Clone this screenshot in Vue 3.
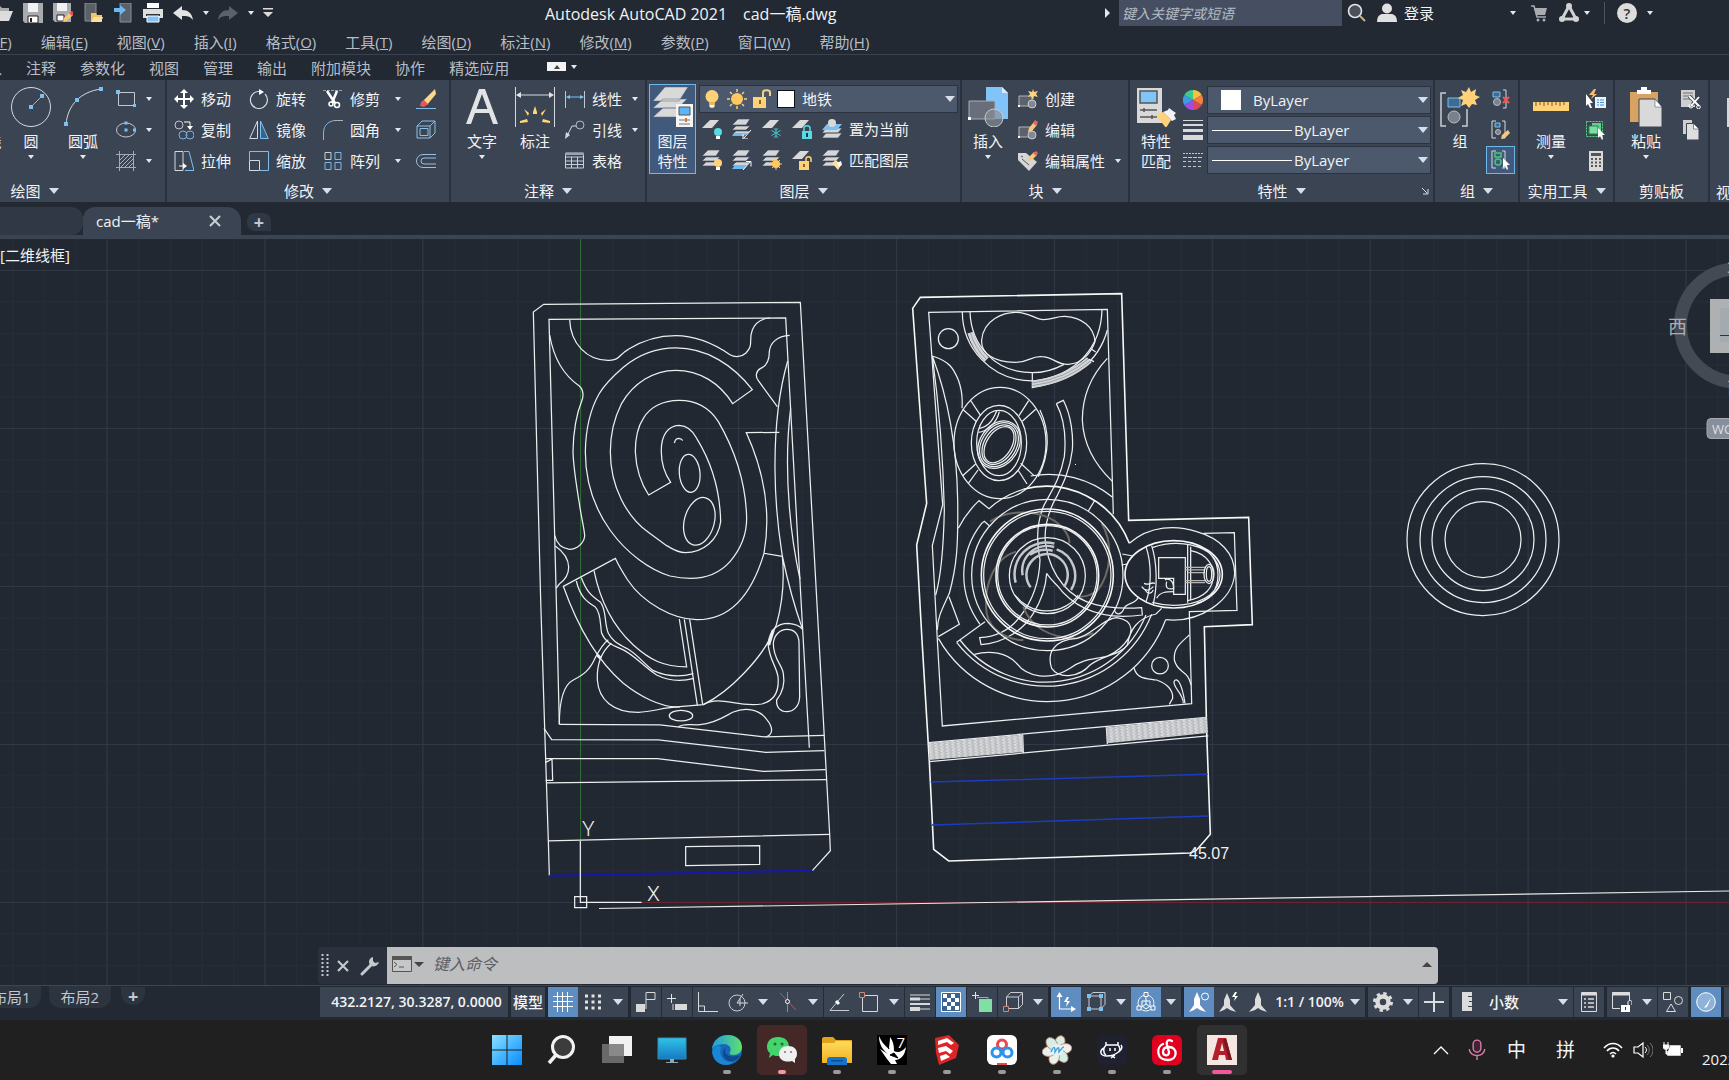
<template>
  <div class="cad">
    <!-- 图标库 -->
    <svg class="sprite" aria-hidden="true">
      <defs>
        <symbol id="open" viewBox="0 0 20 20"><path d="M1 3h6l2 2h7v3H6L2 17H1z" fill="#aaa" /><path d="M5 8h15l-4 10H1z" fill="#dcdcdc" /></symbol>
        <symbol id="save" viewBox="0 0 20 20"><path d="M0 0h20v20H2l-2-2z" fill="#a9abae" /><path d="M5 0h10v9H5z" fill="#f2f2f2" /><path d="M5 13h10v7H5z" fill="#fff" stroke="#222" /><path d="M7 15h2v4H7z" fill="#222" /></symbol>
        <symbol id="saveas" viewBox="0 0 20 20"><path d="M0 0h18v19H2l-2-2z" fill="#a9abae" /><path d="M4 0h10v8H4z" fill="#f2f2f2" /><path d="M4 12h7v6H4z" fill="#fff" stroke="#222" /><path d="M10 19l1-4 6-6 3 3-6 6z" fill="#f3c877" /><path d="M16 10l3-2 2 2-2 3z" fill="#e0565b" /></symbol>
        <symbol id="openweb" viewBox="0 0 20 20"><path d="M2 0h11v18H2z" fill="#5b5f66" stroke="#8b8f95" /><path d="M8 10h5l1 2h5v7H8z" fill="#f1c36b" /><path d="M11 14h9l-2 5H8z" fill="#ffe09a" /></symbol>
        <symbol id="saveweb" viewBox="0 0 20 20"><path d="M7 0h11v19H7z" fill="#5b5f66" stroke="#8b8f95" /><path d="M1 5h6V2l6 5-6 5V9H1z" fill="#6cb9f4" /></symbol>
        <symbol id="print" viewBox="0 0 20 20"><path d="M4 0h12v5H4z" fill="#fff" /><path d="M0 6h20v9H0z" fill="#dedede" /><path d="M3 11h14v2H3z" fill="#333" /><path d="M4 13h12v6H4z" fill="#7fc3f7" stroke="#fff" /></symbol>
        <symbol id="undo" viewBox="0 0 20 20"><path d="M0 10l9-7v4c6 0 10 3 11 10-3-4-6-4-11-4v4z" fill="#e3e3e3" /></symbol>
        <symbol id="redo" viewBox="0 0 20 20"><path d="M20 10l-9-7v4C5 7 1 10 0 17c3-4 6-4 11-4v4z" fill="#5b616b" /></symbol>
        <symbol id="custom" viewBox="0 0 20 20"><path d="M5 5h10v1.500H5zM5 9h10l-5 5z" fill="#dcdcdc" /></symbol>
        <symbol id="find" viewBox="0 0 20 20"><circle cx="8" cy="8" r="6.500" fill="#4b5059" stroke="#e4e4e4" stroke-width="1.600" /><path d="M13 13l5 5" stroke="#d2b27c" stroke-width="2" /></symbol>
        <symbol id="user" viewBox="0 0 20 20"><circle cx="10" cy="5.500" r="5" fill="#e0e0e0" /><path d="M0 19c0-6 3-8 6-8h8c3 0 6 2 6 8z" fill="#e0e0e0" /></symbol>
        <symbol id="cart" viewBox="0 0 20 20"><path d="M2 3h3l3 11h9" fill="none" stroke="#a9acb1" stroke-width="1.500" /><path d="M5 5h13l-2 7H7z" fill="#a9acb1" /><circle cx="9" cy="17" r="1.500" fill="#a9acb1" /><circle cx="15" cy="17" r="1.500" fill="#a9acb1" /></symbol>
        <symbol id="a360" viewBox="0 0 20 20"><path d="M10 3L3 16h14z" fill="none" stroke="#d0d2d4" stroke-width="3" /><circle cx="10" cy="3" r="3" fill="#d0d2d4" /><circle cx="3" cy="16" r="3" fill="#d0d2d4" /><circle cx="17" cy="16" r="3" fill="#d0d2d4" /></symbol>

        <symbol id="pline" viewBox="0 0 40 40"><path d="M2 30h20a10 10 0 0 0 0-20" fill="none" stroke="#d6dae0" /></symbol>
        <symbol id="circle" viewBox="0 0 40 40"><circle cx="20" cy="20" r="19.500" fill="none" stroke="#d6dae0" /><path d="M20 20L31 9" stroke="#7cc0f0" /><path d="M18 18h4v4h-4zM29 7h4v4h-4z" fill="#7cc0f0" /></symbol>
        <symbol id="arc" viewBox="0 0 40 40"><path d="M3 37C5 18 17 5 38 2" fill="none" stroke="#d6dae0" /><path d="M1 35h4v4H1zM12 11h4v4h-4zM36 0h4v4h-4z" fill="#7cc0f0" /></symbol>
        <symbol id="rect" viewBox="0 0 20 20"><path d="M2.500 3.500h16v13h-16z" fill="none" stroke="#c3c8d0" /><path d="M0 1h4v4H0zM17 15h3v3h-3z" fill="#7cc0f0" /></symbol>
        <symbol id="ellipse" viewBox="0 0 20 20"><ellipse cx="10" cy="10" rx="9.500" ry="7" fill="none" stroke="#c3c8d0" /><path d="M8.500 8.500h3v3h-3zM8.500 1.500h3v3h-3zM17 8.500h3v3h-3z" fill="#7cc0f0" /></symbol>
        <symbol id="hatch" viewBox="0 0 20 20"><path d="M3.500 0v20M17.500 0v20M0 3.500h20M0 16.500h20" stroke="#a3abb7" /><path d="M4 9l5-5M4 13l9-9M5 16L16 5M9 16l8-8M13 16l4-4" stroke="#7cc0f0" /></symbol>

        <symbol id="move" viewBox="0 0 20 20"><path d="M10 3v14M3 10h14" stroke="#fff" stroke-width="2" /><path d="M10 0l4 4H6zM10 20l4-4H6zM0 10l4-4v8zM20 10l-4-4v8z" fill="#fff" /></symbol>
        <symbol id="rotate" viewBox="0 0 20 20"><path d="M16 5a8.500 8.500 0 1 1-7-2.500h3" fill="none" stroke="#d6dae0" stroke-width="1.200" /><path d="M10 0l5 3-5 3z" fill="#fff" /></symbol>
        <symbol id="trim" viewBox="0 0 20 20"><path d="M0 1.500h20" stroke="#9aa3af" stroke-dasharray="3 1" /><path d="M4 2l8 12M14 2l-5 12" stroke="#fff" stroke-width="2.500" /><circle cx="8" cy="15" r="2" fill="none" stroke="#fff" stroke-width="1.500" /><circle cx="14" cy="16" r="2.500" fill="none" stroke="#fff" stroke-width="1.500" /></symbol>
        <symbol id="erase" viewBox="0 0 20 20"><path d="M0 19.500h20" stroke="#7cc0f0" /><path d="M7 12L19 0l1 5-9 11z" fill="#ffd88a" /><path d="M5 13l3-2 4 4-4 3-4-1z" fill="#e8555c" /></symbol>
        <symbol id="copy" viewBox="0 0 20 20"><circle cx="5" cy="5" r="4" fill="none" stroke="#c3c8d0" /><circle cx="9" cy="15" r="4" fill="none" stroke="#7cb0e0" /><circle cx="16" cy="15" r="4" fill="none" stroke="#7cb0e0" /><path d="M10 2h6v5" fill="none" stroke="#fff" /><path d="M13 6h6l-3 4z" fill="#fff" /></symbol>
        <symbol id="mirror" viewBox="0 0 20 20"><path d="M8.500 1v17.500H.700z" fill="none" stroke="#d6dae0" /><path d="M11.500 1v17.500h7.800z" fill="#3d6384" stroke="#7cc0f0" /></symbol>
        <symbol id="fillet" viewBox="0 0 20 20"><path d="M.500 20v-7C.500 5 6 .500 13 .500" fill="none" stroke="#7cb8ea" /><path d="M11 .500h9" stroke="#aab1bc" /></symbol>
        <symbol id="explode" viewBox="0 0 20 20"><path d="M1 6l5-5h13v12l-5 5H1zM1 6h13v12M14 6l5-5M4 8.500h8v7H4z" fill="none" stroke="#8fc0e8" /></symbol>
        <symbol id="stretch" viewBox="0 0 20 20"><path d="M1 .500h8v19H1z" fill="none" stroke="#d6dae0" /><path d="M10 .500h5l5 19h-9" fill="none" stroke="#7cc0f0" /><path d="M5 15h6" stroke="#fff" /><path d="M9 12l4 3-4 3z" fill="#fff" /></symbol>
        <symbol id="scale" viewBox="0 0 20 20"><path d="M.500 9V.500h19v19H11" fill="none" stroke="#7cc0f0" /><path d="M.500 9.500h10v10h-10z" fill="none" stroke="#d6dae0" /></symbol>
        <symbol id="array" viewBox="0 0 20 20"><path d="M2 1.500h6v7H2z" fill="none" stroke="#c9ced6" /><path d="M12 1.500h6v7h-6zM2 11.500h6v7H2zM12 11.500h6v7h-6z" fill="none" stroke="#7cb8ea" /></symbol>
        <symbol id="offset" viewBox="0 0 20 20"><path d="M20 3.500H7a6.500 6.500 0 0 0 0 13h13M20 7H8a3 3 0 0 0 0 6h12" fill="none" stroke="#9cc0df" /></symbol>

        <symbol id="text" viewBox="0 0 40 40"><path d="M4 37L17 2h6l13 35h-5l-4-11H13L9 37zM14.500 22h11L20 7z" fill="#e2e3e5" /></symbol>
        <symbol id="dim" viewBox="0 0 40 40"><path d="M.500 0v40M39.500 0v40M2 8h36" stroke="#d6dae0" /><path d="M1 8l5-3v6zM39 8l-5-3v6z" fill="#e2e3e5" /><path d="M18 25l2-6 2 6v2h-4zM9 22l5 4-1 3zM31 22l-5 4 1 3zM5 34l7-2 1 3-8 1zM35 34l-7-2-1 3 8 1z" fill="#ffd873" /></symbol>
        <symbol id="linear" viewBox="0 0 20 20"><path d="M.500 2v17M19.500 2v17" stroke="#c3c8d0" /><path d="M2 8h16" stroke="#7cc0f0" /><path d="M1 8l4-2v4zM19 8l-4-2v4z" fill="#7cc0f0" /></symbol>
        <symbol id="leader" viewBox="0 0 20 20"><circle cx="15" cy="5" r="4" fill="none" stroke="#a9bccf" /><path d="M11 6H7L2 16" fill="none" stroke="#d6dae0" /><path d="M0 19l1-7 4 3z" fill="#d6dae0" /></symbol>
        <symbol id="table" viewBox="0 0 20 20"><path d="M.500 2h18v15h-18zM.500 6h18M.500 10h18M.500 13.500h18M6.500 6v11M12.500 6v11" fill="none" stroke="#c9ced6" /><path d="M0 2h19v2H0z" fill="#9aa3af" /></symbol>

        <symbol id="layerprops" viewBox="0 0 40 40"><path d="M0 30l10-9h24l-9 9zM0 21l10-9h24l-9 9zM0 14L12 0h23l-9 14z" fill="#d9d9d9" stroke="#5b6b80" stroke-width=".5" /><path d="M23 17h17v23H23z" fill="#f5f5f5" /><path d="M26 20h11v8H26z" fill="#5bb6f5" stroke="#555" /><path d="M26 33h11M26 37h11" stroke="#777" /><path d="M33 31v4" stroke="#e07a30" stroke-width="2" /></symbol>
        <symbol id="bulb" viewBox="0 0 20 20"><circle cx="10" cy="7.500" r="6.500" fill="#ffd27a" /><path d="M7 13h6v3H7z" fill="#e6b55c" /><path d="M7.500 16h5v2l-2.500 1-2.500-1z" fill="#fff" /></symbol>
        <symbol id="sun" viewBox="0 0 20 20"><circle cx="10" cy="10" r="6" fill="#ffc95f" /><path d="M10 0v3M10 17v3M0 10h3M17 10h3M3 3l2 2M15 15l2 2M3 17l2-2M15 5l2-2" stroke="#f3d08b" stroke-width="1.500" /></symbol>
        <symbol id="unlock" viewBox="0 0 20 20"><path d="M1 8h13v11H1z" fill="#ffd27a" /><path d="M11 8V3.500c0-3 7-3 7 0V7" fill="none" stroke="#ffd27a" stroke-width="2" /><path d="M7 11h2v4H7z" fill="#8a6424" /></symbol>
        <symbol id="sheet" viewBox="0 0 20 20"><path d="M0 9l8-8h9l-7 8z" fill="#d9d9d9" /></symbol>
        <symbol id="stack" viewBox="0 0 20 20"><path d="M0 16l4-4h14l-4 4zM0 11l4-4h14l-4 4zM0 6l6-6h12l-4 6z" fill="#d4d6d9" stroke="#3b4453" stroke-width=".6" /></symbol>
        <symbol id="l1" viewBox="0 0 20 20"><use href="#sheet" /><circle cx="16" cy="13" r="4" fill="#56dbe0" /><path d="M14 17h4v3h-4z" fill="#fff" /></symbol>
        <symbol id="l2" viewBox="0 0 20 20"><use href="#stack" /><path d="M0 17l3-3h12l-3 3z" fill="#6cb9f4" /><path d="M19 11l-7 8M11 15v5h5" stroke="#fff" fill="none" /></symbol>
        <symbol id="l3" viewBox="0 0 20 20"><use href="#sheet" /><path d="M14 9v10M9.500 11.500l9 5M9.500 16.500l9-5M12 9.500l2 2 2-2M12 18.500l2-2 2 2" stroke="#45c8ce" fill="none" /></symbol>
        <symbol id="l4" viewBox="0 0 20 20"><use href="#sheet" /><path d="M10 12h10v8H10z" fill="#56dbe0" /><path d="M12 12V9c0-3 6-3 6 0v3" stroke="#56dbe0" stroke-width="1.500" fill="none" /><path d="M14 14h2v4h-2z" fill="#235" /></symbol>
        <symbol id="l5" viewBox="0 0 20 20"><path d="M0 19l4-5h16l-4 5zM0 14l4-5h16l-4 5z" fill="#d4d6d9" stroke="#3b4453" stroke-width=".6" /><path d="M0 11l5-6h15l-5 6z" fill="#7cc0f6" /><circle cx="10" cy="4" r="4" fill="#d9d9d9" /></symbol>
        <symbol id="l6" viewBox="0 0 20 20"><use href="#stack" /><circle cx="16" cy="13" r="4" fill="#ffd27a" /><path d="M14 17h4v3h-4z" fill="#fff" /></symbol>
        <symbol id="l7" viewBox="0 0 20 20"><use href="#stack" /><path d="M0 19l3-4h12l-3 4z" fill="#6cb9f4" /><path d="M11 20l7-8M14 11.500h5v5" stroke="#fff" fill="none" /></symbol>
        <symbol id="l8" viewBox="0 0 20 20"><use href="#stack" /><circle cx="14" cy="14" r="4" fill="#ffc95f" /><path d="M14 8v12M8 14h12M10 10l8 8M10 18l8-8" stroke="#ffc95f" /></symbol>
        <symbol id="l9" viewBox="0 0 20 20"><use href="#sheet" /><path d="M7 11h10v9H7z" fill="#ffd27a" /><path d="M14 11V9c0-3 5-3 5 0v3" stroke="#ffd27a" stroke-width="1.500" fill="none" /><path d="M11 14h2v3h-2z" fill="#8a6424" /></symbol>
        <symbol id="l10" viewBox="0 0 20 20"><use href="#stack" /><path d="M10 13l4-3 5 5-3 5z" fill="#ffe09a" /><path d="M15 13l4-2 1 4-3 2z" fill="#fff" /></symbol>

        <symbol id="insert" viewBox="0 0 40 40"><path d="M18 0h16l6 6v26H18z" fill="#80c4fa" /><path d="M34 0v6h6z" fill="#d6ecff" /><path d="M1 14h26v18H1z" fill="#686f7b" stroke="#a9adb4" /><circle cx="26" cy="31" r="9" fill="#8b9099aa" stroke="#c7cad0" /><path d="M0 30h3v3H0z" fill="#fff" /></symbol>
        <symbol id="blk" viewBox="0 0 20 20"><path d="M1 7h13v10H1z" fill="#5b626e" stroke="#b0b4bb" /><circle cx="14" cy="15" r="4" fill="#838891" stroke="#c7cad0" /><path d="M0 16h2v2H0z" fill="#fff" /></symbol>
        <symbol id="create" viewBox="0 0 20 20"><use href="#blk" /><path d="M15 0l1 3 4-1-2 3 2 3-4-1-1 4-2-4-3 1 2-3-2-3 4 1z" fill="#ffd27a" /></symbol>
        <symbol id="edit" viewBox="0 0 20 20"><use href="#blk" /><path d="M10 12l1-4 5-6 3 3-5 6z" fill="#f7c878" /><path d="M15 3l2-3 3 2-2 4z" fill="#e8646a" /></symbol>
        <symbol id="attr" viewBox="0 0 20 20"><path d="M0 2h8l11 9-8 9L0 9z" fill="#d6d6d6" /><path d="M4 8l7 6M3 5l2 1" stroke="#555" /><path d="M10 10l1-4 5-5 3 3-5 5z" fill="#f7c878" /><path d="M15 2l3-2 2 2-2 3z" fill="#e8646a" /></symbol>

        <symbol id="matchprop" viewBox="0 0 40 40"><path d="M1 1h25v35H1z" fill="#d9d9d9" /><path d="M4 4h17v12H4z" fill="#80c4fa" stroke="#555" stroke-width="1.500" /><path d="M4 23h17M4 30h17M8 21v4M16 28v4" stroke="#555" stroke-width="1.500" /><path d="M20 28l7-3 8 8-5 8z" fill="#ffd27a" /><path d="M27 25l5-2 1-2 4 3 3 2-2 2 2 4-4 2z" fill="#f2f2f2" /></symbol>
        <symbol id="wheel" viewBox="0 0 20 20"><path d="M10 10V0a10 10 0 0 1 8.700 5z" fill="#f9c03f" /><path d="M10 10l8.700-5a10 10 0 0 1 0 10z" fill="#f5803e" /><path d="M10 10l8.700 5A10 10 0 0 1 10 20z" fill="#d94a55" /><path d="M10 10v10a10 10 0 0 1-8.700-5z" fill="#a24be0" /><path d="M10 10l-8.700 5a10 10 0 0 1 0-10z" fill="#3a9be8" /><path d="M10 10L1.300 5A10 10 0 0 1 10 0z" fill="#3cc98e" /></symbol>
        <symbol id="lwt" viewBox="0 0 20 20"><path d="M0 .500h20" stroke="#d9d9d9" /><path d="M0 5h20" stroke="#d9d9d9" stroke-width="2" /><path d="M0 10.500h20" stroke="#d9d9d9" stroke-width="3" /><path d="M0 17.500h20" stroke="#d9d9d9" stroke-width="5" /></symbol>
        <symbol id="ltype" viewBox="0 0 20 20"><path d="M0 3.500h20" stroke="#c3c8d0" stroke-dasharray="2 1" /><path d="M0 7.500h20" stroke="#c3c8d0" stroke-dasharray="4 1" /><path d="M0 11.500h20M0 16.500h20" stroke="#c3c8d0" stroke-dasharray="3 2" /></symbol>

        <symbol id="bracket" viewBox="0 0 20 20"><path d="M5 1H1v17h4M11 1h3v17h-3" fill="none" stroke="#d6dae0" /></symbol>
        <symbol id="group" viewBox="0 0 40 40"><path d="M6 6H1v33h5M22 39h5V22" fill="none" stroke="#c9ced6" stroke-width="1.500" /><path d="M8 11h12v9H8z" fill="#3f6a92" stroke="#7cc0f0" /><circle cx="14" cy="30" r="6" fill="#7b818b" stroke="#b9bdc4" /><path d="M29 0l2 5 5-3-1 6 5 2-5 3 2 5-5-1-3 4-3-4-5 2 2-6-5-2 5-3-2-5 5 2z" fill="#ffd27a" /></symbol>
        <symbol id="ungroup" viewBox="0 0 20 20"><path d="M2 3h7v5H2z" fill="#3f6a92" stroke="#7cc0f0" /><circle cx="6" cy="13" r="3.500" fill="#7b818b" stroke="#b9bdc4" /><path d="M12 1h3v18h-3" fill="none" stroke="#d6dae0" /><path d="M12 8l6 6M18 8l-6 6" stroke="#f0565c" stroke-width="2" /></symbol>
        <symbol id="groupedit" viewBox="0 0 20 20"><use href="#bracket" /><path d="M4 3h5v4H4z" fill="#3f6a92" stroke="#7cc0f0" /><circle cx="7" cy="12" r="2.500" fill="#7b818b" stroke="#b9bdc4" /><path d="M10 19l1-4 6-5 2 3-5 5z" fill="#f7c878" /></symbol>
        <symbol id="groupsel" viewBox="0 0 20 20"><use href="#bracket" /><path d="M4 3h6v4H4z" fill="none" stroke="#4cc37a" stroke-width="1.500" /><circle cx="7" cy="12" r="3" fill="none" stroke="#4cc37a" stroke-width="1.500" /><path d="M12 8v10l2-2 2 4 1-1-1-4h3z" fill="#fff" /></symbol>
        <symbol id="measure" viewBox="0 0 40 40"><path d="M2 15h36v9H2z" fill="#ffd27a" /><path d="M5 15v4M9 15v3M13 15v4M17 15v3M21 15v4M25 15v3M29 15v4M33 15v3" stroke="#6d5526" /></symbol>
        <symbol id="qselect" viewBox="0 0 20 20"><path d="M0 5l7 9H4l2 5H4l-2-4-2 2z" fill="#fff" /><path d="M8 0L3 6h4l-2 4 6-5H8l2-5z" fill="#f7bd6a" /><path d="M9 8h11v11H9z" fill="#e9f3fb" /><path d="M11 11h2M14 11h4M11 13.500h2M14 13.500h4M11 16h2M14 16h4" stroke="#3d8fd0" /></symbol>
        <symbol id="selall" viewBox="0 0 20 20"><path d="M.500 1.500h16v15h-16z" fill="none" stroke="#5fd38a" stroke-dasharray="2 1" /><path d="M6 3h9v8H6z" fill="#5fd38a" /><path d="M3 6h9v8H3z" fill="#78e0a0" stroke="#2f7d50" /><path d="M12 8v10l2-2 2 4 1-1-1-4h3z" fill="#fff" /></symbol>
        <symbol id="calc" viewBox="0 0 20 20"><path d="M3 0h14v20H3z" fill="#d9d9d9" /><path d="M5 2h10v3H5z" fill="#555" /><path d="M5 8h10M5 11.500h10M5 15h10" stroke="#555" stroke-width="2" stroke-dasharray="2 2" /></symbol>
        <symbol id="paste" viewBox="0 0 40 40"><path d="M4 5h28v30H4z" fill="#d8a262" /><path d="M11 3h4V0h6v3h4v4H11z" fill="#fff" /><path d="M13 12h16l7 8v20H13z" fill="#d9d9d9" stroke="#3b4453" /><path d="M29 12v8h7z" fill="#fff" stroke="#3b4453" stroke-width=".5" /></symbol>
        <symbol id="cut" viewBox="0 0 20 20"><path d="M0 1h14v17H0z" fill="#cfcfcf" /><path d="M2 4h10M2 7h10M2 10h8" stroke="#6b7079" /><path d="M8 7l10 10M18 8l-8 9" stroke="#3b4453" stroke-width="3.500" /><path d="M8 7l10 10M18 8l-8 9" stroke="#fff" stroke-width="1.800" /><circle cx="10" cy="17" r="2" fill="none" stroke="#fff" /><circle cx="17.500" cy="18" r="1.800" fill="none" stroke="#fff" /></symbol>
        <symbol id="copyclip" viewBox="0 0 20 20"><path d="M2 0h9v14H2z" fill="#cfcfcf" /><path d="M5.500 3.500h7l5.500 5.500v11H5.500z" fill="#dedede" stroke="#3b4453" /><path d="M12.500 3.500v5.500h5.500z" fill="#fff" stroke="#3b4453" stroke-width=".6" /></symbol>
        <symbol id="viewbase" viewBox="0 0 40 40"><path d="M0 11h40v29H0z" fill="#d9d9d9" /></symbol>

        <symbol id="s-grid" viewBox="0 0 20 20"><path d="M4.500 0v20M9.500 0v20M14.500 0v20M0 4.500h20M0 9.500h20M0 14.500h20" stroke="#fff" /></symbol>
        <symbol id="s-snap" viewBox="0 0 20 20"><path d="M2 4h16M2 10h16M2 16h16" stroke="#e4e4e4" stroke-width="3" stroke-dasharray="3 3.500" /></symbol>
        <symbol id="s-infer" viewBox="0 0 20 20"><path d="M0 12h9v8H0z" fill="#d9d9d9" /><path d="M10 17V.500h9v7h-9" fill="none" stroke="#d9d9d9" /></symbol>
        <symbol id="s-dyn" viewBox="0 0 20 20"><path d="M4.500 2v9M0 6.500h9" stroke="#e4e4e4" /><path d="M8 12h12v6H8z" fill="#d9d9d9" /><path d="M6 12v6" stroke="#d9d9d9" /></symbol>
        <symbol id="s-ortho" viewBox="0 0 20 20"><path d="M.500 0v19.500H20M.500 14h6v5.500" fill="none" stroke="#d9d9d9" /></symbol>
        <symbol id="s-polar" viewBox="0 0 20 20"><circle cx="9" cy="11" r="8" fill="none" stroke="#c8ccd2" /><path d="M9 11L15 2M9 11h11M12 7v7" fill="none" stroke="#d9d9d9" /></symbol>
        <symbol id="s-iso" viewBox="0 0 20 20"><path d="M2 1l16 17" stroke="#b0596b" /><path d="M9.500 0v20" stroke="#5fa877" /><circle cx="9.500" cy="9.500" r="2" fill="#3b4453" stroke="#fff" /></symbol>
        <symbol id="s-track" viewBox="0 0 20 20"><path d="M15 2L1 18.500h19" fill="none" stroke="#c8ccd2" /><path d="M7 9l3 3" stroke="#fff" stroke-width="3" /></symbol>
        <symbol id="s-osnap" viewBox="0 0 20 20"><path d="M3.500 3.500h15v16h-15z" fill="none" stroke="#d9d9d9" /><path d="M.500.500h5v5h-5z" fill="#3b4453" stroke="#c98873" /></symbol>
        <symbol id="s-lwt" viewBox="0 0 20 20"><path d="M0 3h20M0 7h20M0 17h20" stroke="#d9d9d9" /><path d="M0 7h10" stroke="#d9d9d9" stroke-width="3" /><path d="M0 12h20" stroke="#d9d9d9" stroke-width="2" /><path d="M0 17h10" stroke="#d9d9d9" stroke-width="4" /></symbol>
        <symbol id="s-trans" viewBox="0 0 20 20"><path d="M.500.500h19v19H.500z" fill="#3b6390" stroke="#fff" /><path d="M2 4h16M2 12h16" stroke="#fff" stroke-width="4" stroke-dasharray="4 4" /><path d="M6 8h12M6 16h12" stroke="#fff" stroke-width="4" stroke-dasharray="4 4" /></symbol>
        <symbol id="s-cycle" viewBox="0 0 20 20"><path d="M3.500 0v7M0 3.500h7" stroke="#e4e4e4" /><path d="M5 5.500h11v10" fill="none" stroke="#5fd38a" /><path d="M7 7h13v13H7z" fill="#7fdfa4" /></symbol>
        <symbol id="s-3d" viewBox="0 0 20 20"><path d="M3.500 14V5l4-4.500h12v12l-4 4H6M3.500 5h12v12M15.500 5l4-4" fill="none" stroke="#c8ccd2" /><path d="M.500 14.500h5v5h-5z" fill="#3b4453" stroke="#c98873" /></symbol>
        <symbol id="s-ducs" viewBox="0 0 20 20"><path d="M3.500 2v15H18" fill="none" stroke="#fff" stroke-width="1.200" /><path d="M3.500 0l3 5h-6zM20 17l-5-3v6z" fill="#fff" /><path d="M11 5l-3 5h3l-1 5 4-6h-3l2-4z" fill="#fff" /></symbol>
        <symbol id="s-filter" viewBox="0 0 20 20"><path d="M3 4h12v13H3zM3 4l4-3.500h12v12l-4 4" fill="none" stroke="#c8ccd2" /><path d="M1 2h4v4H1zM13 2h4v4h-4zM1 15h4v4H1zM13 15h4v4h-4z" fill="#7cc0f0" /></symbol>
        <symbol id="s-gizmo" viewBox="0 0 20 20"><circle cx="10" cy="11" r="8" fill="none" stroke="#e8eef5" /><path d="M10 2v10l-7 5M10 12l7 5M6 9h8v5l-4 3-4-3z" fill="none" stroke="#fff" /><path d="M8 .500h4v4H8zM1 14h4v4H1zM15 14h4v4h-4z" fill="#5f8dc0" stroke="#fff" /></symbol>
        <symbol id="s-ann" viewBox="0 0 20 20"><path d="M9 0l3 7v6l6 7-6-2-3-2-3 2-6 2 6-7V7z" fill="#dcdcdc" /></symbol>
        <symbol id="s-annvis" viewBox="0 0 20 20"><path d="M8 0l3 7v6l6 7-6-2-3-2-3 2-5 2 5-7V7z" fill="#fff" /><circle cx="16" cy="4.500" r="3.500" fill="none" stroke="#fff" /></symbol>
        <symbol id="s-annauto" viewBox="0 0 20 20"><path d="M8 1l3 7v5l6 7-6-2-3-2-3 2-5 2 5-7V8z" fill="#dcdcdc" /><path d="M16 0l-3 5h3l-1 4 4-5h-3l2-4z" fill="#fff" /></symbol>
        <symbol id="gear" viewBox="0 0 20 20"><circle cx="10" cy="10" r="8" fill="none" stroke="#dcdcdc" stroke-width="4" stroke-dasharray="3.140 3.140" /><circle cx="10" cy="10" r="5.500" fill="none" stroke="#dcdcdc" stroke-width="4.500" /></symbol>
        <symbol id="s-plus" viewBox="0 0 20 20"><path d="M10 0v20M0 10h20" stroke="#dcdcdc" stroke-width="2" /></symbol>
        <symbol id="s-unit" viewBox="0 0 20 20"><path d="M5 0h10v4h-4v1h4v4h-3v1h3v4h-4v1h4v4H5z" fill="#dcdcdc" /></symbol>
        <symbol id="s-qp" viewBox="0 0 20 20"><path d="M2.500 .500h15v19h-15z" fill="none" stroke="#dcdcdc" /><path d="M3 2h14" stroke="#dcdcdc" stroke-width="3" /><path d="M5 7h2M9 7h6M5 11h2M9 11h6M5 15h2M9 15h6" stroke="#dcdcdc" stroke-width="1.500" /></symbol>
        <symbol id="s-lock" viewBox="0 0 20 20"><path d="M8 16.500H.500v-16h17V8" fill="none" stroke="#dcdcdc" /><path d="M0 2h18" stroke="#dcdcdc" stroke-width="3" /><path d="M9 13h9v7H9z" fill="#fff" /><path d="M16 13v-3c0-2 4-2 4 0v3" fill="none" stroke="#fff" /><path d="M13.500 15v3" stroke="#333" /></symbol>
        <symbol id="s-isolate" viewBox="0 0 20 20"><path d="M.500.500h7v7h-7zM8 12l4.500 7.500h-9z" fill="none" stroke="#dcdcdc" /><circle cx="15.500" cy="8.500" r="4" fill="none" stroke="#dcdcdc" /></symbol>
        <symbol id="s-hw" viewBox="0 0 20 20"><circle cx="10" cy="10" r="9.300" fill="#8fb2d8" stroke="#fff" /><path d="M8 16l7-10-4 9z" fill="#fff" /></symbol>

        <symbol id="prompt" viewBox="0 0 20 20"><path d="M.500 2.500h19v15H.500z" fill="#c6c7c9" stroke="#555" /><path d="M0 2h20v4H0z" fill="#555" /><path d="M2 8l3 2.500L2 13M7 13h5" fill="none" stroke="#555" /></symbol>
        <symbol id="wrench" viewBox="0 0 20 20"><path d="M2 18L11 9" stroke="#c5c8cc" stroke-width="3" stroke-linecap="round" /><path d="M13 1c-4 1-5 5-3 8 3 3 8 1 9-3l-4 1-2-2z" fill="#c5c8cc" /></symbol>

        <linearGradient id="winblue" x1="0" y1="0" x2="1" y2="1"><stop offset="0" stop-color="#8ae0ff" /><stop offset="1" stop-color="#078cff" /></linearGradient>
        <linearGradient id="screen" x1="0" y1="0" x2="0" y2="1"><stop offset="0" stop-color="#2fc3e6" /><stop offset="1" stop-color="#1779c2" /></linearGradient>
        <linearGradient id="edgeg" x1="0" y1="0" x2="1" y2="0"><stop offset="0" stop-color="#219be0" /><stop offset="1" stop-color="#5fe06e" /></linearGradient>
        <linearGradient id="foldg" x1="0" y1="0" x2="0" y2="1"><stop offset="0" stop-color="#ffdb5c" /><stop offset="1" stop-color="#f4b321" /></linearGradient>
        <symbol id="t-win" viewBox="0 0 30 30"><path d="M0 0h14.500v14.500H0zM15.500 0H30v14.500H15.500zM0 15.500h14.500V30H0zM15.500 15.500H30V30H15.500z" fill="url(#winblue)" /></symbol>
        <symbol id="t-search" viewBox="0 0 30 30"><circle cx="16" cy="12" r="10.500" fill="#3c3c3c" stroke="#f2f2f2" stroke-width="3" /><path d="M9 20l-7 8" stroke="#f2f2f2" stroke-width="3.500" /></symbol>
        <symbol id="t-view" viewBox="0 0 30 30"><path d="M7 1h23v20H7z" fill="#f2f2f2" /><path d="M0 9h22v19H0z" fill="#777" opacity=".85" /></symbol>
        <symbol id="t-pc" viewBox="0 0 30 30"><path d="M1 3h28v21H1z" fill="url(#screen)" stroke="#2f8fb5" /><path d="M13 24h4v3h4v1H9v-1h4z" fill="#8fa6b5" /></symbol>
        <symbol id="t-edge" viewBox="0 0 30 30"><circle cx="15" cy="15" r="15" fill="#1668b8" /><path d="M0 14C1 5 8 0 16 0c9 0 14 6 14 12 0 5-4 8-9 8-3 0-4-1-3-3 2-4-1-8-6-8C6 9 1 12 0 14z" fill="url(#edgeg)" /><path d="M9 13c-3 7 3 15 12 14-4 4-12 4-17-1C-1 20-1 13 5 11c2-1 4 0 4 2z" fill="#1b86d6" /><path d="M14 12c-3 7 3 12 14 8-2 5-7 7-11 6-7-2-8-10-3-14z" fill="#114a8b" /></symbol>
        <symbol id="t-wechat" viewBox="0 0 30 30"><path d="M11 2c7 0 11 4 11 10 0 5-4 9-11 9-2 0-3 0-5-1l-4 3 1-5c-2-1-3-4-3-6C0 6 4 2 11 2z" fill="#45d36b" /><circle cx="8" cy="9" r="1.500" fill="#1b7036" /><circle cx="15" cy="9" r="1.500" fill="#1b7036" /><path d="M21 11c6 0 9 3 9 8 0 2-1 4-2 5v4l-3-2c-7 2-13-1-13-7 0-5 4-8 9-8z" fill="#efefef" /><circle cx="18" cy="17" r="1" fill="#777" /><circle cx="24" cy="17" r="1" fill="#777" /></symbol>
        <symbol id="t-folder" viewBox="0 0 30 30"><path d="M0 4c0-1 1-2 2-2h9l3 3h16v8H0z" fill="#e1a11b" /><path d="M0 8h12l2-2h14c1 0 2 1 2 2v20H0z" fill="url(#foldg)" /><path d="M5 30v-5c0-2 1-3 3-3h14c2 0 3 1 3 3v5z" fill="#1673c9" /><path d="M9 25h12v1.500H9z" fill="#0a4f93" /></symbol>
        <symbol id="t-rhino" viewBox="0 0 30 30"><path d="M0 0h30v30H0z" fill="#000" /><path d="M2 1c0 9 4 14 9 18l-8-5 7 10 4 5h6l-2-4c6 0 10-5 11-13-4 5-8 6-12 4 0-6-1-10-4-14 0 5-1 8-1 12C7 10 4 6 2 1z" fill="#fff" /><path d="M13 20l8 3-4-5zM9 8l3 6" fill="#000" stroke="#000" /></symbol>
        <symbol id="t-sketch" viewBox="0 0 30 30"><path d="M3 3l14-3 10 10-3 13-17 7-3-12z" fill="#dd2426" /><path d="M6 6l9-3 7 5-3 2-4-3-9 3zM6 13l8-2 7 5-3 3-4-3-7 2zM8 21l6-2 4 3-9 4z" fill="#fff" /></symbol>
        <symbol id="t-baidu" viewBox="0 0 30 30"><rect width="30" height="30" rx="6" fill="#fff" /><g fill="none" stroke-width="3"><circle cx="15" cy="9.500" r="4.500" stroke="#e8474c" /><circle cx="9.500" cy="17.500" r="4.500" stroke="#2a94ee" /><circle cx="20.500" cy="17.500" r="4.500" stroke="#2a94ee" /></g><path d="M10 28h10v2H10z" fill="#e8474c" /></symbol>
        <symbol id="t-flower" viewBox="0 0 30 30"><g stroke="#b9806a" stroke-width=".8"><ellipse cx="15" cy="7" rx="5" ry="7" fill="#d7ece4" transform="rotate(20 15 15)" /><ellipse cx="15" cy="7" rx="5" ry="7" fill="#f1efe9" transform="rotate(80 15 15)" /><ellipse cx="15" cy="7" rx="5" ry="7" fill="#d3f0e8" transform="rotate(140 15 15)" /><ellipse cx="15" cy="7" rx="5" ry="7" fill="#e6f2ea" transform="rotate(200 15 15)" /><ellipse cx="15" cy="7" rx="5" ry="7" fill="#eaeeee" transform="rotate(260 15 15)" /><ellipse cx="15" cy="7" rx="5" ry="7" fill="#d7ece4" transform="rotate(320 15 15)" /></g><circle cx="15" cy="15" r="6" fill="#e6f1f6" /><path d="M9 17c3-7 4-5 4 0 4-7 4-4 4 0 2-2 3-5 5-5" fill="none" stroke="#4aa3d8" stroke-width="1.500" /></symbol>
        <symbol id="t-cat" viewBox="0 0 30 30"><rect width="30" height="30" rx="6" fill="#1f2130" /><path d="M9 7v3h12V7M9 10c-3 3-3 8 0 10M21 10c2 2 2 5 1 7M7 13c-5 3-4 8 3 8 8 0 18-7 14-11M13 13v3M18 13v3M14 20l4 3M18 20l-4 3" fill="none" stroke="#fff" stroke-width="1.500" /></symbol>
        <symbol id="t-netease" viewBox="0 0 30 30"><rect width="30" height="30" rx="6" fill="#e20020" /><path d="M20 6c-4-2-6 0-5 4l2 7c0 5-6 4-6 0 0-3 2-5 6-5 9 0 9 13-1 13-12 0-12-13-5-16" fill="none" stroke="#fff" stroke-width="2.300" stroke-linecap="round" /></symbol>
        <symbol id="t-cad" viewBox="0 0 30 30"><path d="M0 0h30v30H0z" fill="#f6e6e2" /><path d="M5 25L11 3h8l6 22h-6l-1-5h-6l-1 5zM13 16h4l-2-8z" fill="#b3202c" /><path d="M19 3l6 22h-3L16 5z" fill="#7d1820" /></symbol>
        <symbol id="mic" viewBox="0 0 20 20"><rect x="6.500" y="1" width="7" height="11" rx="3.500" fill="#3f2532" stroke="#d77aa6" stroke-width="1.300" /><path d="M3 9c0 8 14 8 14 0M10 15v4" fill="none" stroke="#d77aa6" stroke-width="1.300" /></symbol>
        <symbol id="wifi" viewBox="0 0 20 20"><path d="M1 8c5-6 13-6 18 0M4 11c3-4 9-4 12 0M7 14c2-2 4-2 6 0" fill="none" stroke="#fff" stroke-width="1.500" /><circle cx="10" cy="16" r="1.600" fill="#fff" /></symbol>
        <symbol id="vol" viewBox="0 0 20 20"><path d="M1 7h4l5-4v14l-5-4H1z" fill="none" stroke="#fff" stroke-width="1.200" /><path d="M12 7c2 2 2 4 0 6" fill="none" stroke="#fff" /><path d="M14 5c3 3 3 7 0 10M17 3c4 4 4 10 0 14" fill="none" stroke="#777" /></symbol>
        <symbol id="batt" viewBox="0 0 20 20"><path d="M7 6h10v9H5v-4" fill="#fff" stroke="#fff" stroke-width="1.400" /><path d="M18 8h2v5h-2z" fill="#fff" /><path d="M1 2v3M5 2v3M0 5h6v2c0 3-6 3-6 0zM3 9v5h2" fill="#fff" stroke="#fff" /></symbol>
      </defs>
    </svg>

    <header class="titlebar">
      <div class="quick">
        <template v-for="q in quickTools" :key="q.icon">
          <button class="bare" :aria-label="q.label"><svg class="ic"><use :href="'#' + q.icon" /></svg></button>
          <span v-if="q.caret" class="quick-caret"><i class="caret"></i></span>
        </template>
      </div>
      <h1 class="title"><span>Autodesk AutoCAD 2021</span><span>cad一稿.dwg</span></h1>
      <div class="infocenter">
        <button class="expander" aria-label="展开"><i class="caret-right"></i></button>
        <input class="keyword" type="text" placeholder="键入关键字或短语" aria-label="搜索关键字" />
        <button class="bare" aria-label="搜索"><svg class="ic"><use href="#find" /></svg></button>
        <button class="login"><svg class="ic"><use href="#user" /></svg>登录<i class="caret"></i></button>
        <button class="bare" aria-label="应用商店"><svg class="ic"><use href="#cart" /></svg></button>
        <button class="bare" aria-label="连接"><svg class="ic"><use href="#a360" /></svg></button>
        <i class="caret"></i>
        <span class="bar"></span>
        <button class="help" aria-label="帮助">?</button>
        <i class="caret help-caret"></i>
      </div>
    </header>

    <nav class="menubar" aria-label="菜单">
      <a v-for="m in menus" :key="m.key" href="#">{{ m.name }}(<u>{{ m.key }}</u>)</a>
    </nav>

    <nav class="tabs" aria-label="功能区">
      <a v-for="t in tabs" :key="t" href="#">{{ t }}</a>
      <button class="minimize" aria-label="最小化功能区"><span class="min-box"><i class="caret-up"></i></span><i class="caret"></i></button>
    </nav>

    <section class="ribbon">
      <div class="panel p-draw">
        <div class="body">
          <button class="big"><svg class="ic40"><use href="#pline" /></svg><span>多段线</span></button>
          <button class="big"><svg class="ic40"><use href="#circle" /></svg><span>圆</span><i class="caret"></i></button>
          <button class="big"><svg class="ic40"><use href="#arc" /></svg><span>圆弧</span><i class="caret"></i></button>
          <div class="col">
            <button v-for="d in ['rect', 'ellipse', 'hatch']" :key="d" class="tool" :aria-label="d"><svg class="ic"><use :href="'#' + d" /></svg><i class="caret"></i></button>
          </div>
        </div>
        <div class="caption">绘图<i class="caret wide"></i></div>
      </div>

      <div class="panel p-modify">
        <div class="body">
          <div class="modify-grid">
            <button v-for="m in modifyTools" :key="m.icon" class="tool" :aria-label="m.icon">
              <svg class="ic"><use :href="'#' + m.icon" /></svg><span v-if="m.text">{{ m.text }}</span><i v-if="m.caret" class="caret"></i>
            </button>
          </div>
        </div>
        <div class="caption">修改<i class="caret wide"></i></div>
      </div>

      <div class="panel p-annotate">
        <div class="body">
          <button class="big"><svg class="ic40"><use href="#text" /></svg><span>文字</span><i class="caret"></i></button>
          <button class="big"><svg class="ic40"><use href="#dim" /></svg><span>标注</span></button>
          <div class="col">
            <button class="tool"><svg class="ic"><use href="#linear" /></svg><span>线性</span><i class="caret"></i></button>
            <button class="tool"><svg class="ic"><use href="#leader" /></svg><span>引线</span><i class="caret"></i></button>
            <button class="tool"><svg class="ic"><use href="#table" /></svg><span>表格</span></button>
          </div>
        </div>
        <div class="caption">注释<i class="caret wide"></i></div>
      </div>

      <div class="panel p-layer">
        <div class="body">
          <button class="big on"><svg class="ic40"><use href="#layerprops" /></svg><span>图层<br />特性</span></button>
          <div class="layer-side">
            <label class="combo layer-combo">
              <svg class="ic"><use href="#bulb" /></svg>
              <svg class="ic"><use href="#sun" /></svg>
              <svg class="ic"><use href="#unlock" /></svg>
              <span class="swatch framed"></span>
              <select aria-label="图层"><option>地铁</option></select>
              <i class="caret wide"></i>
            </label>
            <div class="layer-row">
              <button v-for="n in 4" :key="n" class="tool" :aria-label="'图层工具' + n"><svg class="ic"><use :href="'#l' + n" /></svg></button>
              <button class="tool"><svg class="ic"><use href="#l5" /></svg><span>置为当前</span></button>
            </div>
            <div class="layer-row">
              <button v-for="n in [6, 7, 8, 9]" :key="n" class="tool" :aria-label="'图层工具' + n"><svg class="ic"><use :href="'#l' + n" /></svg></button>
              <button class="tool"><svg class="ic"><use href="#l10" /></svg><span>匹配图层</span></button>
            </div>
          </div>
        </div>
        <div class="caption">图层<i class="caret wide"></i></div>
      </div>

      <div class="panel p-block">
        <div class="body">
          <button class="big"><svg class="ic40"><use href="#insert" /></svg><span>插入</span><i class="caret"></i></button>
          <div class="col">
            <button class="tool"><svg class="ic"><use href="#create" /></svg><span>创建</span></button>
            <button class="tool"><svg class="ic"><use href="#edit" /></svg><span>编辑</span></button>
            <button class="tool"><svg class="ic"><use href="#attr" /></svg><span>编辑属性</span><i class="caret"></i></button>
          </div>
        </div>
        <div class="caption">块<i class="caret wide"></i></div>
      </div>

      <div class="panel p-props">
        <div class="body">
          <button class="big"><svg class="ic40"><use href="#matchprop" /></svg><span>特性<br />匹配</span></button>
          <div class="props">
            <div class="prop">
              <svg class="ic"><use href="#wheel" /></svg>
              <label class="combo"><span class="swatch"></span><select aria-label="颜色"><option>ByLayer</option></select><i class="caret wide"></i></label>
            </div>
            <div class="prop">
              <svg class="ic"><use href="#lwt" /></svg>
              <label class="combo"><span class="rule"></span><select aria-label="线宽"><option>ByLayer</option></select><i class="caret wide"></i></label>
            </div>
            <div class="prop">
              <svg class="ic"><use href="#ltype" /></svg>
              <label class="combo"><span class="rule"></span><select aria-label="线型"><option>ByLayer</option></select><i class="caret wide"></i></label>
            </div>
          </div>
        </div>
        <div class="caption">特性<i class="caret wide"></i>
          <svg class="launcher" viewBox="0 0 8 8"><path d="M1 1l5 5M7 2v5H2" fill="none" stroke="#d9dfe8" /></svg>
        </div>
      </div>

      <div class="panel p-group">
        <div class="body">
          <button class="big"><svg class="ic40"><use href="#group" /></svg><span>组</span></button>
          <div class="col icons">
            <button class="tool" aria-label="解除编组"><svg class="ic"><use href="#ungroup" /></svg></button>
            <button class="tool" aria-label="组编辑"><svg class="ic"><use href="#groupedit" /></svg></button>
            <button class="tool on" aria-label="启用组选择"><svg class="ic"><use href="#groupsel" /></svg></button>
          </div>
        </div>
        <div class="caption">组<i class="caret wide"></i></div>
      </div>

      <div class="panel p-util">
        <div class="body">
          <button class="big"><svg class="ic40"><use href="#measure" /></svg><span>测量</span><i class="caret"></i></button>
          <div class="col icons">
            <button class="tool" aria-label="快速选择"><svg class="ic"><use href="#qselect" /></svg></button>
            <button class="tool" aria-label="全部选择"><svg class="ic"><use href="#selall" /></svg></button>
            <button class="tool" aria-label="计算器"><svg class="ic"><use href="#calc" /></svg></button>
          </div>
        </div>
        <div class="caption">实用工具<i class="caret wide"></i></div>
      </div>

      <div class="panel p-util">
        <div class="body">
          <button class="big"><svg class="ic40"><use href="#paste" /></svg><span>粘贴</span><i class="caret"></i></button>
          <div class="col icons">
            <button class="tool" aria-label="剪切"><svg class="ic"><use href="#cut" /></svg></button>
            <button class="tool" aria-label="复制"><svg class="ic"><use href="#copyclip" /></svg></button>
          </div>
        </div>
        <div class="caption">剪贴板</div>
      </div>

      <div class="panel p-view">
        <div class="body"><svg class="ic40"><use href="#viewbase" /></svg></div>
        <div class="caption">视图</div>
      </div>
    </section>

    <div class="doctabs">
      <button class="doc idle" aria-label="开始"></button>
      <div class="doc current"><span>cad一稿*</span><button class="close" aria-label="关闭"><svg viewBox="0 0 12 12"><path d="M1 1l10 10M11 1L1 11" stroke="#c9ced6" stroke-width="2" /></svg></button></div>
      <button class="add" aria-label="新建">+</button>
    </div>

    <main class="viewport">
      <svg class="drawing" viewBox="0 239 1729 746" preserveAspectRatio="xMinYMin slice">
        <defs>
          <pattern id="minor" x="12" y="17" width="31.580" height="31.600" patternUnits="userSpaceOnUse"><path d="M0 .500h31.580M.500 0v31.600" stroke="#262d38" /></pattern>
          <pattern id="major" x="106.500" y="112" width="157.900" height="158" patternUnits="userSpaceOnUse"><path d="M0 .500h157.900M.500 0v158" stroke="#303845" /></pattern>
          <pattern id="brick" width="17" height="9" patternUnits="userSpaceOnUse" patternTransform="rotate(-5)"><path d="M0 0h17v9H0z" fill="#e2e3e4" /><path d="M0 2h12M5 5h12M1 8h9" stroke="#777c85" stroke-width="1.200" /></pattern>
        </defs>
        <rect y="239" width="1729" height="746" fill="url(#minor)" />
        <rect y="239" width="1729" height="746" fill="url(#major)" />
        <path d="M580.500 239V840" stroke="#2c6b33" />
        <path d="M642 902.500H1729" stroke="#6b2430" />
        <path d="M599 908.500L1729 891" stroke="#e8e8e8" stroke-width="1.200" />

        <!-- 左侧平面 -->
        <g class="ink" transform="translate(500 280) scale(.33333)">
          <path d="M148 1787L145 1683L134 1345L122 960L100 96L131 73L901 67L947 900L989 1663L991 1712L937 1772" />
          <path d="M178 1333L168 920L147 118L857 114L903 960L928 1403" />
          <path d="M178 1333L480 1335L797 1371L973 1366M132 1345L155 1379L475 1380L797 1417L973 1412M138 1436L472 1436L790 1474L977 1469M138 1509L980 1499M145 1683L989 1663M136 1448L156 1437L158 1501L137 1501" />
          <path d="M557 1700L779 1697L779 1753L557 1757Z" />
          <path d="M209 120C212 190 260 243 328 241C360 240 355 225 385 208C430 180 480 167 527 167C590 167 640 190 690 224C705 233 725 231 738 219C762 195 745 180 757 150C765 130 780 116 810 114" />
          <path d="M149 165C160 230 190 285 238 318C248 328 252 340 247 358C230 400 220 450 219 514C220 560 228 610 238 670C245 720 253 745 254 768C252 790 230 808 208 808C185 805 170 790 164 766M166 798C190 815 206 835 206 862C206 885 195 900 178 912L168 925" />
          <path d="M757 329C700 255 620 204 527 204C470 204 415 225 370 262C340 288 310 320 297 342C270 390 257 450 256 515C256 600 280 680 330 750C380 820 450 870 510 888C590 906 650 890 690 845C720 810 740 770 740 715C738 620 710 520 655 425C630 385 590 361 537 361C490 361 450 380 430 415C410 445 406 480 406 515C408 560 420 605 446 645L512 607C490 575 483 545 484 510C484 465 505 437 537 436C565 437 580 455 590 475C630 540 660 620 662 725C655 780 610 818 555 818C530 817 520 808 500 797L445 757C380 710 331 620 331 515C331 460 345 410 365 370C400 310 460 271 527 271C600 271 660 310 698 371Z" />
          <path d="M523 489C525 480 530 475 537 475C543 476 547 479 548 482" />
          <ellipse cx="569" cy="580" rx="31" ry="57" transform="rotate(-5 569 580)" />
          <ellipse cx="598" cy="724" rx="45" ry="73" transform="rotate(15 598 724)" />
          <path d="M869 166C830 168 810 190 808 215C808 240 800 258 782 265C768 272 765 290 775 302L832 380M863 243C835 340 824 450 825 570C826 700 838 770 847 828C860 890 880 970 907 1046M847 828C853 890 850 960 829 1035M872 385C860 480 860 580 868 680C875 770 885 830 900 897" />
          <path d="M838 457L739 458C790 570 815 690 792 820L847 829M792 820C750 960 680 1020 590 1019C520 1018 430 970 383 900C370 880 355 855 346 835L190 919C240 1060 300 1150 370 1210C420 1250 480 1280 530 1281L610 1274C700 1230 780 1130 805 1085L829 1035" />
          <path d="M282 872C300 960 340 1040 400 1095C450 1140 490 1160 560 1161L538 1017M553 1018L592 1276M569 1018L608 1274" />
          <path d="M229 903C240 950 260 965 285 980C305 1000 300 1040 305 1060C315 1085 335 1095 360 1105C400 1120 430 1160 470 1185C500 1200 540 1206 582 1195M244 893C258 930 270 945 300 965C320 985 312 1030 325 1060C335 1080 350 1090 380 1105C415 1125 430 1150 460 1172C500 1190 540 1192 580 1181" />
          <path d="M325 1079C310 1090 295 1115 285 1135C270 1170 250 1185 220 1200C190 1215 178 1260 178 1333M334 1090C305 1115 290 1150 292 1200C296 1260 340 1297 415 1297C460 1296 490 1281 540 1281" />
          <path d="M610 1274C640 1258 665 1262 700 1268C740 1275 770 1274 785 1272C825 1262 838 1230 834 1190C828 1155 808 1140 804 1090C810 1050 830 1030 865 1030C885 1032 900 1038 907 1047" />
          <path d="M861 1048C885 1048 895 1065 897 1085L899 1250C898 1280 880 1295 860 1295C840 1295 828 1280 830 1260C850 1235 855 1210 850 1180C845 1150 820 1140 820 1090C822 1065 840 1048 861 1048Z" />
          <path d="M292 1125l10 10M820 1050L806 1095" stroke-width="3" />
          <ellipse cx="543" cy="1307" rx="35" ry="16" />
          <path d="M535 1341C550 1328 570 1336 600 1334C650 1330 680 1305 700 1296C740 1280 780 1290 800 1318C822 1345 818 1365 797 1371" />
          <path d="M148 1787L937 1772" stroke="#1616b0" stroke-width="2" />
          <path d="M241 1683V1867H425M224 1850H260V1883H224Z" />
        </g>
        <text class="ucs" x="582" y="836">Y</text>
        <text class="ucs" x="647" y="901">X</text>

        <!-- 右侧平面 -->
        <g class="ink" transform="translate(890 280) scale(.33333)">
          <path class="heavy" d="M68 85L91 52L695 41L716 721L1076 712L1087 1034L943 1040L950 1355L961 1663L918 1712L900 1719L176 1743L131 1708L118 1445L96 1080L80 795L110 670Z" />
          <path d="M940 760L1033 758L1041 991L898 995L905 1271L157 1338L142 1080L127 797L158 674L116 97L652 88L670 703" />
          <path d="M217 96C217 200 300 302 427 303M240 96C243 190 310 278 427 278C470 278 500 265 522 253M636 88C634 200 560 290 427 303M652 150C630 230 570 300 427 322M427 278V325M605 208L617 216M597 238L612 245" />
          <path d="M241 158Q255 205 290 239" stroke="#d3d5d8" stroke-width="6" />
          <path d="M427 313Q530 300 598 240" stroke="#d3d5d8" stroke-width="7" />
          <path d="M241 158Q255 205 290 239M427 309Q530 296 596 236M427 317Q530 304 600 244" stroke="#777c85" stroke-width=".6" />
          <path d="M275 180C280 120 340 96 380 97C420 98 435 118 460 119C490 118 500 108 525 109C575 112 612 140 615 185C605 215 580 250 535 253C500 255 490 230 455 230C420 228 420 247 375 247C310 245 272 220 275 180Z" />
          <circle cx="175" cy="176" r="30" />
          <path d="M652 235C600 290 577 350 577 420C580 490 610 550 668 605" />
          <path d="M127 228C180 245 190 265 205 300C220 340 217 370 216 385M127 228C165 330 200 480 203 660C205 800 200 860 178 940C160 980 142 1010 142 1050M127 228C150 400 160 560 163 690C160 830 150 900 137 945" />
          <ellipse cx="330" cy="489" rx="138" ry="167" />
          <path d="M450 390C478 450 480 520 445 590" />
          <ellipse cx="327" cy="489" rx="83" ry="113" />
          <ellipse cx="327" cy="489" rx="67" ry="98" />
          <path d="M241 360L272 407M218 388L260 425M416 362L387 407M437 388L397 424M218 587L257 552M235 610L264 570M384 570L411 612M392 550L432 587" />
          <g transform="rotate(33 327 494)">
            <ellipse cx="327" cy="494" rx="58" ry="76" /><ellipse cx="327" cy="494" rx="52" ry="71" />
            <ellipse cx="327" cy="494" rx="44" ry="65" /><ellipse cx="327" cy="494" rx="37" ry="60" />
          </g>
          <path d="M328 395C320 430 290 455 265 457M320 393C305 430 290 440 268 446" />
          <path d="M499 371L520 361C545 410 550 470 547 510C540 570 520 610 500 650C470 700 460 760 468 800C475 840 490 880 520 915C570 975 650 990 755 983L757 1005C650 1020 560 995 500 915C490 905 480 895 470 880M499 371C525 420 528 480 523 530C510 600 480 640 460 680C440 730 440 790 450 840C448 900 430 960 390 1010C360 1050 320 1070 269 1073L273 1094C340 1090 400 1050 430 1000C455 960 468 915 470 880" />
          <g stroke="#6d6a66" stroke-width="2">
            <path d="M300 725C350 690 430 690 480 715C520 735 540 770 538 790M635 730C670 790 665 880 620 935C600 945 590 950 570 950M378 815C310 835 280 920 290 1000C300 1050 350 1080 400 1080M400 980C420 1040 480 1075 560 1075L610 1060" />
          </g>
          <circle class="heavy" cx="472" cy="885" r="198" />
          <circle cx="472" cy="885" r="191" />
          <circle cx="472" cy="885" r="227" />
          <circle class="heavy" cx="472" cy="887" r="154" />
          <circle cx="472" cy="886" r="149" />
          <circle cx="472" cy="887" r="114" />
          <path d="M375 945A114 107 0 0 0 565 945" />
          <path d="M205 745A302 302 0 0 1 267 662L297 686A266 266 0 0 1 400 628M422 588A303 303 0 0 1 668 652M595 693L615 660M270 1033A250 250 0 0 1 275 730L283 724L298 737" />
          <path class="heavy" d="M400 628A267 267 0 0 1 718 790" />
          <path d="M145 1075A378 378 0 0 0 827 1019M200 1087A340 340 0 0 0 785 1003M210 1080A325 325 0 0 0 768 1005M200 1087L285 1025M145 1070L208 1033L177 950" />
          <g stroke="#c4c7cb" stroke-width="2.500">
            <path d="M377 908A95 95 0 0 1 493 791M398 886A74 74 0 0 1 492 801M422 922A62 62 0 1 1 522 920M420 824A85 85 0 0 1 488 812M500 808A83 83 0 0 1 543 930" />
          </g>
          <path d="M718 790C780 735 860 735 920 755C990 775 1034 820 1034 880C1030 960 930 1030 827 1019" />
          <ellipse class="heavy" cx="851" cy="883" rx="146" ry="101" />
          <path d="M787 803C850 780 920 790 960 820C1000 860 1000 910 960 945C920 975 850 985 787 967M920 797C970 815 984 850 984 885C984 930 960 960 920 970M902 812C955 822 970 860 970 885C970 920 950 950 893 962" />
          <path d="M768 800C785 850 785 920 768 965M785 797C802 850 802 920 790 972M893 795V968M902 800V960M697 822L728 828M695 855L712 852" />
          <path d="M806 833H886V943H851V895H806Z" />
          <path d="M886 862H945M886 870H945M895 878H945M886 902H945M886 908H945" stroke="#b9b6b8" />
          <ellipse cx="957" cy="882" rx="15" ry="29" /><ellipse cx="957" cy="882" rx="8" ry="22" />
          <path d="M762 910C780 918 780 905 795 910M755 920C770 940 785 925 790 920M765 930C775 945 785 940 790 930M825 900C830 895 850 895 851 925C835 930 825 925 830 905M800 955C810 935 830 935 851 935" />
          <path d="M745 950C740 975 705 965 700 990C690 1010 670 1000 675 985" />
          <path d="M253 1123C300 1110 350 1118 380 1150C410 1190 480 1205 540 1165C600 1120 640 1150 690 1105C740 1060 730 1020 680 1013C640 1015 600 1070 560 1075C490 1080 470 1120 485 1165C510 1200 570 1190 600 1155C640 1125 690 1125 712 1095C720 1050 740 1015 798 1002L815 985" />
          <circle cx="810" cy="1157" r="25" />
          <path d="M898 1065C870 1090 850 1105 853 1140C862 1180 895 1170 903 1215M732 1163C740 1200 775 1195 800 1200C830 1210 850 1230 848 1255L838 1273M852 1205C860 1190 875 1205 885 1270M852 1205C850 1225 880 1240 880 1270" />
          <path d="M116 1388L950 1312M118 1445L955 1368M398 1362L400 1418M649 1340L652 1392" />
          <path d="M116 1388L398 1364L400 1416L118 1440Z" fill="url(#brick)" stroke="none" />
          <path d="M649 1342L951 1312L953 1359L652 1390Z" fill="url(#brick)" stroke="none" />
          <path d="M122 1506L953 1483M125 1635L955 1608" stroke="#1c3cc0" stroke-width="1.500" />
        </g>
        <text class="dimtext" x="1189" y="859">45.07</text>
        <path d="M1075 464.500h1" stroke="#fff" />

        <g class="ink">
          <circle v-for="r in [76, 63, 51, 38]" :key="r" cx="1483" cy="539.500" :r="r" />
        </g>

        <!-- 视图立方体 -->
        <circle cx="1737" cy="325.500" r="56.500" fill="none" stroke="#444a54" stroke-width="13" />
        <path d="M1710 299h54v54h-54z" fill="#aeb0b2" />
        <path d="M1720 308h34v34h-34z" fill="#a3aab0" />
        <path d="M1720 335.500h34" stroke="#333" />
        <text class="compass" x="1668" y="334">西</text>
        <text class="compass" x="1727" y="274">北</text>
        <text class="compass" x="1727" y="395">南</text>
        <rect x="1707" y="418.500" width="60" height="20" rx="4" fill="#898e9b" stroke="#a5a9b4" />
        <text class="wcs" x="1712" y="434">WCS</text>
      </svg>

      <span class="viewlabel">[二维线框]</span>

      <div class="cmd">
        <div class="cmd-handle">
          <svg class="grip" viewBox="0 0 8 24"><path d="M1.500 0v24M6.500 0v24" stroke="#c5c8cc" stroke-width="2" stroke-dasharray="2 2" /></svg>
          <button class="bare small" aria-label="关闭命令行"><svg viewBox="0 0 12 12" class="x"><path d="M1 1l10 10M11 1L1 11" stroke="#c5c8cc" stroke-width="2.200" /></svg></button>
          <button class="bare small" aria-label="自定义"><svg class="ic"><use href="#wrench" /></svg></button>
        </div>
        <div class="cmd-field">
          <svg class="ic"><use href="#prompt" /></svg><i class="caret dark"></i>
          <input type="text" placeholder="键入命令" aria-label="命令行" />
          <i class="caret-up"></i>
        </div>
      </div>
    </main>

    <footer class="status">
      <div class="layouts">
        <button>布局1</button><button>布局2</button><button class="plus" aria-label="新建布局">+</button>
      </div>
      <div class="cells">
        <div class="cell-group"><button class="coords">432.2127, 30.3287, 0.0000</button></div>
        <div class="cell-group"><button class="model">模型</button></div>
        <div v-for="(g, gi) in statusGroups" :key="gi" class="cell-group">
          <template v-for="c in g" :key="c.icon">
            <button class="cell" :class="{ active: c.on, sep: c.sep }" :aria-label="c.icon"><svg class="ic"><use :href="'#' + c.icon" /></svg></button>
            <button v-if="c.text" class="cell-text">{{ c.text }}</button>
            <select v-if="c.options" class="units" aria-label="单位"><option v-for="o in c.options" :key="o">{{ o }}</option></select>
            <button v-if="c.caret" class="cell-caret" aria-label="更多"><i class="caret wide"></i></button>
          </template>
        </div>
      </div>
    </footer>

    <footer class="taskbar">
      <div></div>
      <div class="apps">
        <button v-for="a in apps" :key="a.icon" :class="[a.mode, { running: a.run }]" :aria-label="a.label">
          <svg><use :href="'#' + a.icon" /></svg>
          <span v-if="a.icon === 't-rhino'" class="ver">7</span>
        </button>
      </div>
      <div class="tray">
        <svg class="chev" viewBox="0 0 16 10"><path d="M1 9l7-7 7 7" fill="none" stroke="#fff" stroke-width="1.300" /></svg>
        <svg class="mic"><use href="#mic" /></svg>
        <span class="ime">中</span>
        <span class="ime pin">拼</span>
        <svg class="sys"><use href="#wifi" /></svg>
        <svg class="sys"><use href="#vol" /></svg>
        <svg class="sys"><use href="#batt" /></svg>
        <span class="date">2022</span>
      </div>
    </footer>
  </div>
</template>

<script setup>
const quickTools = [
  { icon: 'open', label: '打开' },
  { icon: 'save', label: '保存' },
  { icon: 'saveas', label: '另存为' },
  { icon: 'openweb', label: '从 Web 打开' },
  { icon: 'saveweb', label: '保存到 Web' },
  { icon: 'print', label: '打印' },
  { icon: 'undo', label: '放弃', caret: true },
  { icon: 'redo', label: '重做', caret: true },
  { icon: 'custom', label: '自定义' }
]

const menus = [
  { name: '文件', key: 'F' },
  { name: '编辑', key: 'E' },
  { name: '视图', key: 'V' },
  { name: '插入', key: 'I' },
  { name: '格式', key: 'O' },
  { name: '工具', key: 'T' },
  { name: '绘图', key: 'D' },
  { name: '标注', key: 'N' },
  { name: '修改', key: 'M' },
  { name: '参数', key: 'P' },
  { name: '窗口', key: 'W' },
  { name: '帮助', key: 'H' }
]

const tabs = ['插入', '注释', '参数化', '视图', '管理', '输出', '附加模块', '协作', '精选应用']

const modifyTools = [
  { icon: 'move', text: '移动' },
  { icon: 'rotate', text: '旋转' },
  { icon: 'trim', text: '修剪', caret: true },
  { icon: 'erase' },
  { icon: 'copy', text: '复制' },
  { icon: 'mirror', text: '镜像' },
  { icon: 'fillet', text: '圆角', caret: true },
  { icon: 'explode' },
  { icon: 'stretch', text: '拉伸' },
  { icon: 'scale', text: '缩放' },
  { icon: 'array', text: '阵列', caret: true },
  { icon: 'offset' }
]

const statusGroups = [
  [{ icon: 's-grid', on: true }, { icon: 's-snap', caret: true }],
  [
    { icon: 's-infer' },
    { icon: 's-dyn', sep: true },
    { icon: 's-ortho', sep: true },
    { icon: 's-polar', caret: true },
    { icon: 's-iso', caret: true },
    { icon: 's-track', sep: true },
    { icon: 's-osnap', caret: true },
    { icon: 's-lwt', sep: true },
    { icon: 's-trans', on: true, sep: true },
    { icon: 's-cycle', sep: true },
    { icon: 's-3d', sep: true, caret: true }
  ],
  [{ icon: 's-ducs', on: true }, { icon: 's-filter', caret: true }, { icon: 's-gizmo', on: true, caret: true }],
  [{ icon: 's-annvis', on: true }, { icon: 's-annauto' }, { icon: 's-ann', text: '1:1 / 100%', caret: true }],
  [{ icon: 'gear', caret: true }, { icon: 's-plus', sep: true }],
  [{ icon: 's-unit', options: ['小数'], caret: true }, { icon: 's-qp', sep: true }],
  [{ icon: 's-lock', caret: true }, { icon: 's-isolate', sep: true }],
  [{ icon: 's-hw', on: true }],
  [{ icon: 's-plus' }]
]

const apps = [
  { icon: 't-win', label: '开始' },
  { icon: 't-search', label: '搜索' },
  { icon: 't-view', label: '任务视图' },
  { icon: 't-pc', label: '此电脑' },
  { icon: 't-edge', label: 'Edge', run: true },
  { icon: 't-wechat', label: '微信', run: true, mode: 'alert' },
  { icon: 't-folder', label: '文件资源管理器', run: true },
  { icon: 't-rhino', label: 'Rhino 7', run: true },
  { icon: 't-sketch', label: 'SketchUp', run: true },
  { icon: 't-baidu', label: '百度网盘', run: true },
  { icon: 't-flower', label: '图库', run: true },
  { icon: 't-cat', label: '助手', run: true },
  { icon: 't-netease', label: '网易云音乐', run: true },
  { icon: 't-cad', label: 'AutoCAD', run: true, mode: 'focus' }
]
</script>

<style>
html,
body {
  background: #202020;
}
</style>

<style scoped>
.cad {
  display: flex;
  flex-direction: column;
  height: 100vh;
  overflow: hidden;
  background: #222933;
  color: #f1f3f5;
  font-family: "Open Sans", "Noto Sans CJK SC", sans-serif;
  font-size: 15px;
  line-height: 20px;
}

.cad > * {
  flex: none;
}

.sprite {
  position: absolute;
  width: 0;
  height: 0;
}

button,
input,
select {
  margin: 0;
  padding: 0;
  border: 0;
  background: none;
  color: inherit;
  font: inherit;
}

select {
  appearance: none;
  outline: none;
}

a {
  color: inherit;
  text-decoration: none;
}

.ic {
  flex: none;
  width: 20px;
  height: 20px;
}

.ic40 {
  flex: none;
  width: 40px;
  height: 40px;
}

.caret,
.caret-up,
.caret-right {
  flex: none;
  width: 0;
  height: 0;
  border: 3px solid transparent;
  border-top: 4px solid #e4e7eb;
  border-bottom: 0;
}

.caret.wide {
  border-width: 6px 5px 0;
  border-top-color: #d9dfe8;
}

.caret.dark {
  border-width: 5px 5px 0;
  border-top-color: #444;
}

.caret-up {
  border: 3px solid transparent;
  border-bottom: 4px solid #444;
  border-top: 0;
}

.caret-right {
  border: 5px solid transparent;
  border-left: 5px solid #e4e7eb;
  border-right: 0;
}

/* 标题栏 */
.titlebar {
  display: flex;
  height: 28px;
}

.quick {
  display: flex;
  align-items: center;
  flex: 0 0 557px;
  margin-left: -12px;
  height: 26px;
}

.bare {
  display: flex;
  align-items: center;
  justify-content: center;
  width: 30px;
  height: 26px;
}

.quick .bare:last-child {
  width: 20px;
}

.quick-caret {
  display: flex;
  justify-content: center;
  width: 15px;
}

.title {
  display: flex;
  flex: 1;
  gap: 16px;
  margin: 0;
  font-size: 16px;
  font-weight: 400;
  line-height: 29px;
  white-space: nowrap;
}

.infocenter {
  display: flex;
  align-items: center;
  height: 26px;
  padding-right: 76px;
}

.expander {
  width: 14px;
  line-height: 0;
  text-align: left;
}

.expander .caret-right {
  display: inline-block;
}

.keyword {
  width: 223px;
  height: 26px;
  padding-left: 3px;
  box-sizing: border-box;
  background: #454f61;
  font-style: italic;
  font-size: 14px;
}

.keyword::placeholder {
  color: #b4bac4;
  opacity: 1;
}

.login {
  display: flex;
  align-items: center;
  gap: 7px;
  margin: 0 8px 0 5px;
}

.login .caret {
  margin-left: 69px;
}

.bar {
  width: 1px;
  height: 22px;
  margin: 0 12px 0 14px;
  background: #4b5260;
}

.help {
  width: 20px;
  height: 20px;
  border-radius: 50%;
  background: #dcdcdc;
  color: #333;
  font-weight: 600;
}

.help-caret {
  margin-left: 10px;
}

/* 菜单和功能区选项卡 */
.menubar {
  display: flex;
  gap: 1px;
  height: 26px;
  margin-left: -49px;
  border-bottom: 1px solid #3a4250;
  color: #b9bec6;
  line-height: 29px;
}

.menubar a {
  padding: 0 14px;
  white-space: nowrap;
}

.tabs {
  display: flex;
  height: 25px;
  margin-left: -40px;
  color: #b9bec6;
  line-height: 26px;
}

.tabs a {
  padding: 0 12px;
}

.minimize {
  display: flex;
  align-items: center;
  gap: 5px;
  height: 23px;
  margin-left: 26px;
}

.min-box {
  display: flex;
  align-items: center;
  justify-content: center;
  width: 19px;
  height: 9px;
  background: #f4f4f4;
}

/* 功能区 */
.ribbon {
  display: flex;
  height: 122px;
  background: #3b4453;
  overflow: hidden;
}

.panel {
  display: flex;
  flex: none;
  flex-direction: column;
  box-sizing: border-box;
  border-right: 2px solid #2a313d;
}

.body {
  display: flex;
  gap: 7px;
  height: 100px;
}

.caption {
  position: relative;
  display: flex;
  align-items: center;
  justify-content: center;
  gap: 8px;
  height: 22px;
}

.launcher {
  position: absolute;
  right: 4px;
  width: 8px;
  height: 8px;
}

.big {
  display: flex;
  flex: none;
  flex-direction: column;
  align-items: center;
  width: 46px;
  padding-top: 7px;
  white-space: nowrap;
}

.big span {
  margin: 4px 0;
}

.big.on {
  width: 47px;
  height: 90px;
  margin-top: 4px;
  padding-top: 2px;
  box-sizing: border-box;
  border: 1px solid #6fb7ea;
  background: #41597a;
}

.col {
  display: flex;
  flex-direction: column;
  padding-top: 3px;
}

.tool {
  display: flex;
  align-items: center;
  gap: 7px;
  height: 31px;
  white-space: nowrap;
}

.tool .caret {
  margin-left: 3px;
}

.modify-grid .tool .caret {
  margin-left: 8px;
}

.icons .tool {
  justify-content: center;
  width: 29px;
}

.tool.on {
  height: 28px;
  margin-top: 1px;
  box-sizing: border-box;
  border: 1px solid #6fb7ea;
  background: #41597a;
}

.p-draw {
  width: 263px;
  margin-left: -96px;
}

.p-draw .body {
  gap: 4px;
  padding-left: 51px;
}

.p-draw .big {
  width: 48px;
}

.p-draw .col {
  margin-left: 5px;
}

.p-modify {
  width: 284px;
}

.modify-grid {
  display: grid;
  grid-template-columns: 75px 74px 93px 20px;
  grid-auto-rows: 31px;
  padding: 3px 0 0 7px;
}

.p-annotate {
  width: 196px;
}

.p-annotate .body,
.p-util .body {
  padding-left: 8px;
}

.p-layer {
  width: 315px;
}

.p-layer .body {
  gap: 3px;
  padding-left: 2px;
}

.layer-side {
  flex: 1;
  padding: 5px 2px 0 0;
}

.combo {
  display: flex;
  align-items: center;
  height: 28px;
  padding-right: 2px;
  box-sizing: border-box;
  border: 1px solid #2b3340;
  background: #4c586b;
}

.combo select {
  flex: 1;
}

.layer-combo {
  gap: 5px;
  padding-left: 2px;
}

.layer-combo select {
  padding-left: 2px;
}

.swatch {
  width: 20px;
  height: 20px;
  background: #fff;
}

.swatch.framed {
  width: 16px;
  height: 16px;
  border: 1px solid #111;
}

.layer-row {
  display: flex;
  gap: 10px;
  padding-left: 3px;
}

.p-block {
  width: 168px;
}

.p-block .body,
.p-props .body {
  padding-left: 3px;
}

.p-props {
  width: 305px;
}

.p-props .body {
  gap: 4px;
}

.props {
  display: flex;
  flex: 1;
  flex-direction: column;
  gap: 2px;
  padding: 6px 2px 0 0;
}

.prop {
  display: flex;
  align-items: center;
  gap: 4px;
}

.prop .combo {
  flex: 1;
}

.prop .swatch {
  margin: 0 12px 0 13px;
}

.rule {
  width: 80px;
  height: 1px;
  margin: 0 2px 0 4px;
  background: #fff;
}

.p-group {
  width: 85px;
}

.p-group .body {
  gap: 3px;
  padding-left: 2px;
}

.p-util {
  width: 95px;
}

.p-view {
  flex: 1;
  border: 0;
  overflow: hidden;
}

.p-view .body {
  padding: 7px 0 0 17px;
}

.p-view .caption {
  justify-content: flex-start;
  padding-left: 6px;
  white-space: nowrap;
}

/* 文档标签 */
.doctabs {
  display: flex;
  align-items: flex-end;
  height: 33px;
  border-bottom: 4px solid #3b4453;
}

.doc {
  height: 28px;
}

.doc.idle {
  width: 83px;
  border-radius: 0 12px 12px 0;
  background: #303845;
}

.doc.current {
  display: flex;
  align-items: center;
  justify-content: space-between;
  width: 158px;
  padding: 0 20px 0 13px;
  box-sizing: border-box;
  border-radius: 12px 14px 0 0;
  background: #3b4453;
}

.close {
  width: 12px;
  height: 12px;
  line-height: 0;
}

.add,
.plus {
  width: 24px;
  height: 18px;
  margin: 0 0 4px 6px;
  border-radius: 8px 8px 0 8px;
  background: #303845;
  color: #c3c8d0;
  font-size: 18px;
  font-weight: 700;
  line-height: 18px;
}

/* 绘图区 */
.cad > .viewport {
  position: relative;
  flex: 1;
  min-height: 0;
  overflow: hidden;
  background: #212831;
}

.drawing {
  display: block;
  width: 100%;
  height: 100%;
}

.ink {
  fill: none;
  stroke: #eceef0;
  stroke-width: 1.25px;
}

.ink * {
  vector-effect: non-scaling-stroke;
}

.heavy {
  stroke: #f8f8f8;
  stroke-width: 1.6px;
}

.ucs {
  fill: #f0f0f0;
  font: 300 21px Roboto, sans-serif;
}

.dimtext {
  fill: #f0f0f0;
  font: 16px "Liberation Sans", sans-serif;
}

.compass {
  fill: #a9adb2;
  font-size: 19px;
}

.wcs {
  fill: #dcdfe6;
  font-size: 13px;
}

.viewlabel {
  position: absolute;
  top: 6px;
  left: 0;
}

.cmd {
  position: absolute;
  left: 318px;
  right: 291px;
  bottom: 1px;
  display: flex;
  height: 37px;
  border-radius: 4px;
  background: #2a303c;
  overflow: hidden;
}

.cmd-handle {
  display: flex;
  align-items: center;
  width: 69px;
}

.grip {
  width: 8px;
  height: 24px;
  margin-left: 3px;
}

.bare.small {
  width: 27px;
}

.x {
  width: 12px;
  height: 12px;
}

.cmd-field {
  display: flex;
  flex: 1;
  align-items: center;
  gap: 2px;
  padding: 0 6px 3px 5px;
  background: #bdbec0;
}

.cmd-field input {
  flex: 1;
  padding-left: 7px;
  font-size: 16px;
  font-style: italic;
}

.cmd-field input::placeholder {
  color: #5c5f64;
  opacity: 1;
}

.cmd-field .caret-up {
  border-width: 0 5px 5px;
}

/* 状态栏 */
.status {
  display: flex;
  height: 34px;
  border-top: 1px solid #3c4656;
  overflow: hidden;
}

.layouts {
  display: flex;
  align-items: flex-start;
  flex: 0 0 336px;
  margin-left: -18px;
  margin-right: 2px;
  color: #c3c8d0;
}

.layouts button {
  height: 22px;
  padding: 0 10px;
  border-radius: 0 0 12px 12px;
  background: #2c3440;
}

.layouts button + button {
  padding: 0 12px;
  margin-left: 8px;
}

.layouts .plus {
  height: 18px;
  margin: 1px 0 0 10px;
}

.layouts button.plus {
  padding: 0;
  margin-left: 10px;
}

.cells {
  display: flex;
  gap: 3px;
  padding-top: 1px;
}

.cell-group {
  display: flex;
  flex: none;
  height: 30px;
  background: #3b4453;
  font-size: 15px;
  white-space: nowrap;
}

.coords {
  width: 188px;
  padding-left: 5px;
  font-size: 14px;
  font-weight: 600;
}

.model {
  width: 34px;
  font-weight: 500;
}

.cell {
  display: flex;
  align-items: center;
  justify-content: center;
  width: 30px;
}

.cell.sep {
  width: 31px;
  border-left: 1px solid #252c37;
}

.cell.active {
  background: #5f8dc0;
}

.cell-text {
  width: 71px;
  font-size: 14px;
  font-weight: 600;
}

.units {
  width: 71px;
  padding-left: 7px;
  font-weight: 500;
}

.cell-caret {
  display: flex;
  align-items: center;
  justify-content: center;
  width: 20px;
}

/* 任务栏 */
.taskbar {
  display: grid;
  grid-template-columns: 1fr auto 1fr;
  height: 60px;
  background: #202020;
}

.apps {
  display: flex;
  align-items: center;
  gap: 5px;
}

.apps button {
  position: relative;
  display: flex;
  align-items: center;
  justify-content: center;
  width: 50px;
  height: 50px;
  border-radius: 5px;
}

.apps svg {
  width: 30px;
  height: 30px;
}

.apps .alert {
  background: #442727;
}

.apps .focus {
  background: #303030;
}

.apps .running::after {
  content: "";
  position: absolute;
  bottom: 1px;
  left: 50%;
  width: 8px;
  height: 4px;
  margin-left: -4px;
  border-radius: 2px;
  background: #9a9a9a;
}

.apps .alert::after {
  background: #f596a5;
}

.apps .focus::after {
  width: 20px;
  margin-left: -10px;
  background: #f2589b;
}

.ver {
  position: absolute;
  top: 8px;
  right: 12px;
  color: #fff;
  font-size: 15px;
  line-height: 18px;
}

.tray {
  display: flex;
  align-items: center;
  justify-content: flex-end;
  overflow: hidden;
}

.chev {
  width: 16px;
  height: 10px;
  margin-right: 17px;
}

.mic {
  width: 22px;
  height: 22px;
  margin-right: 19px;
}

.ime {
  width: 20px;
  margin-right: 29px;
  font-size: 19px;
}

.ime.pin {
  margin-right: 27px;
}

.sys {
  width: 20px;
  height: 20px;
  margin-right: 10px;
}

.date {
  width: 27px;
  padding-top: 18px;
  margin-left: 9px;
  white-space: nowrap;
  overflow: hidden;
}
</style>
